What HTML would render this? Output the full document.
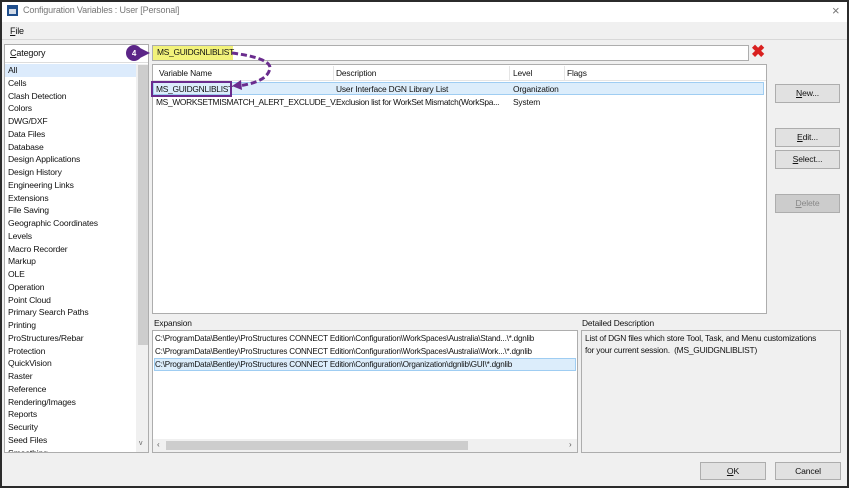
<!DOCTYPE html>
<html><head><style>
*{box-sizing:border-box;margin:0;padding:0}
body{width:849px;height:488px;overflow:hidden;background:#f0f0f0;font-family:"Liberation Sans",sans-serif;font-size:8.4px;letter-spacing:-0.15px;color:#111;position:relative}
.frame{position:absolute;inset:0;border:2px solid #2b2b2b;pointer-events:none;z-index:10}
.abs{position:absolute}
.box{position:absolute;background:#fff;border:1px solid #adadad}
.btn{position:absolute;background:#e1e1e1;border:1px solid #adadad;text-align:center;line-height:17px;font-size:8.6px}
.cat div{height:12.76px;line-height:12.76px;padding-left:3px;white-space:nowrap;font-size:8.6px}
.row{position:absolute;left:0;right:0;height:13px;line-height:13px;white-space:nowrap}
.ex{position:absolute;left:2px;white-space:nowrap;font-size:8.1px;letter-spacing:-0.2px}
</style></head><body>
<div class="abs" style="left:0;top:0;width:849px;height:22px;background:#fff"></div>
<div class="abs" style="left:7px;top:5px;width:11px;height:11px;background:#1f4e8c"></div>
<div class="abs" style="left:9px;top:9px;width:7px;height:5px;background:#fff;opacity:.8"></div>
<div class="abs" style="left:23px;top:5px;color:#777;font-size:9px">Configuration Variables : User [Personal]</div>
<div class="abs" style="left:832px;top:3px;color:#777;font-size:13px">×</div>
<div class="abs" style="left:0;top:22px;width:849px;height:18px;background:#f0f0f0;border-bottom:1px solid #d8d8d8"></div>
<div class="abs" style="left:10px;top:26px;font-size:9px"><u>F</u>ile</div>

<div class="box" style="left:4px;top:44px;width:145px;height:409px;overflow:hidden">
 <div style="height:18px;line-height:17px;padding-left:5px;border-bottom:1px solid #ddd;font-size:9px"><u>C</u>ategory</div>
 <div class="cat" style="margin-top:1px;width:131px">
 <div style="background:#dcebfc">All</div><div>Cells</div><div>Clash Detection</div><div>Colors</div><div>DWG/DXF</div><div>Data Files</div><div>Database</div><div>Design Applications</div><div>Design History</div><div>Engineering Links</div><div>Extensions</div><div>File Saving</div><div>Geographic Coordinates</div><div>Levels</div><div>Macro Recorder</div><div>Markup</div><div>OLE</div><div>Operation</div><div>Point Cloud</div><div>Primary Search Paths</div><div>Printing</div><div>ProStructures/Rebar</div><div>Protection</div><div>QuickVision</div><div>Raster</div><div>Reference</div><div>Rendering/Images</div><div>Reports</div><div>Security</div><div>Seed Files</div><div>Smoothing</div>
 </div>
 <div class="abs" style="left:131px;top:19px;width:13px;height:389px;background:#f0f0f0"></div>
 <div class="abs" style="left:133px;top:20px;width:10px;height:280px;background:#cdcdcd"></div>
 <div class="abs" style="left:134px;top:395px;font-size:7px;color:#666">v</div>
</div>

<div class="box" style="left:152px;top:45px;width:597px;height:16px"></div>
<div class="abs" style="left:153px;top:46px;width:80px;height:14px;background:#f2f27a"></div>
<div class="abs" style="left:157px;top:47px;font-size:8.4px;letter-spacing:-0.25px">MS_GUIDGNLIBLIST</div>
<div class="abs" style="left:751px;top:42px;color:#d9201f;font-size:17px;font-weight:bold">✖</div>

<div class="box" style="left:152px;top:64px;width:615px;height:250px">
 <div class="abs" style="left:0;top:0;width:613px;height:16px;border-bottom:1px solid #e5e5e5"></div>
 <div class="abs" style="left:180px;top:1px;width:1px;height:15px;background:#e5e5e5"></div>
 <div class="abs" style="left:356px;top:1px;width:1px;height:15px;background:#e5e5e5"></div>
 <div class="abs" style="left:411px;top:1px;width:1px;height:15px;background:#e5e5e5"></div>
 <div class="abs" style="left:6px;top:3px">Variable Name</div>
 <div class="abs" style="left:183px;top:3px">Description</div>
 <div class="abs" style="left:360px;top:3px">Level</div>
 <div class="abs" style="left:414px;top:3px">Flags</div>
 <div class="row" style="top:17px;background:#dcedfb;border:1px solid #9fcdf2;width:611px"></div>
 <div class="abs" style="left:3px;top:19px;letter-spacing:-0.25px">MS_GUIDGNLIBLIST</div>
 <div class="abs" style="left:183px;top:19px">User Interface DGN Library List</div>
 <div class="abs" style="left:360px;top:19px">Organization</div>
 <div class="abs" style="left:3px;top:32px;letter-spacing:-0.3px">MS_WORKSETMISMATCH_ALERT_EXCLUDE_V...</div>
 <div class="abs" style="left:183px;top:32px;letter-spacing:-0.3px">Exclusion list for WorkSet Mismatch(WorkSpa...</div>
 <div class="abs" style="left:360px;top:32px">System</div>
</div>
<div class="abs" style="left:151px;top:81px;width:81px;height:16px;border:2px solid #6a2c8e"></div>

<svg class="abs" style="left:120px;top:40px" width="160" height="60" viewBox="0 0 160 60">
 <circle cx="14" cy="13" r="8" fill="#5b2587"/>
 <path d="M20 8 L30 13 L20 18 Z" fill="#5b2587"/>
 <text x="14" y="16" fill="#fff" font-size="8" font-weight="bold" text-anchor="middle" font-family="Liberation Sans">4</text>
 <path d="M112 13 Q150 18 150 28 Q148 42 118 46" fill="none" stroke="#6a2c8e" stroke-width="3" stroke-dasharray="6 3"/>
 <path d="M112 46 L121 40 L122 50 Z" fill="#6a2c8e"/>
</svg>

<div class="btn" style="left:775px;top:84px;width:65px;height:19px"><u>N</u>ew...</div>
<div class="btn" style="left:775px;top:128px;width:65px;height:19px"><u>E</u>dit...</div>
<div class="btn" style="left:775px;top:150px;width:65px;height:19px"><u>S</u>elect...</div>
<div class="btn" style="left:775px;top:194px;width:65px;height:19px;color:#888;background:#ccc"><u>D</u>elete</div>

<div class="abs" style="left:154px;top:318px">Expansion</div>
<div class="box" style="left:152px;top:330px;width:426px;height:123px">
 <div class="ex" style="top:3px">C:\ProgramData\Bentley\ProStructures CONNECT Edition\Configuration\WorkSpaces\Australia\Stand...\*.dgnlib</div>
 <div class="ex" style="top:16px">C:\ProgramData\Bentley\ProStructures CONNECT Edition\Configuration\WorkSpaces\Australia\Work...\*.dgnlib</div>
 <div class="abs" style="left:1px;top:27px;width:422px;height:13px;background:#dcedfb;border:1px solid #9fcdf2"></div>
 <div class="ex" style="top:29px">C:\ProgramData\Bentley\ProStructures CONNECT Edition\Configuration\Organization\dgnlib\GUI\*.dgnlib</div>
 <div class="abs" style="left:0;top:108px;width:424px;height:13px;background:#f0f0f0"></div>
 <div class="abs" style="left:13px;top:110px;width:302px;height:9px;background:#cdcdcd"></div>
 <div class="abs" style="left:4px;top:109px;font-size:8px;color:#555">‹</div>
 <div class="abs" style="left:416px;top:109px;font-size:8px;color:#555">›</div>
</div>
<div class="abs" style="left:582px;top:318px">Detailed Description</div>
<div class="abs" style="left:581px;top:330px;width:260px;height:123px;border:1px solid #adadad;background:#f0f0f0;padding:2px 3px;line-height:11.5px;font-size:8.4px;letter-spacing:-0.2px;white-space:nowrap">List of DGN files which store Tool, Task, and Menu customizations<br>for your current session.&nbsp; (MS_GUIDGNLIBLIST)</div>

<div class="btn" style="left:700px;top:462px;width:66px;height:18px"><u>O</u>K</div>
<div class="btn" style="left:775px;top:462px;width:66px;height:18px">Cancel</div>
<div class="frame"></div>
</body></html>
